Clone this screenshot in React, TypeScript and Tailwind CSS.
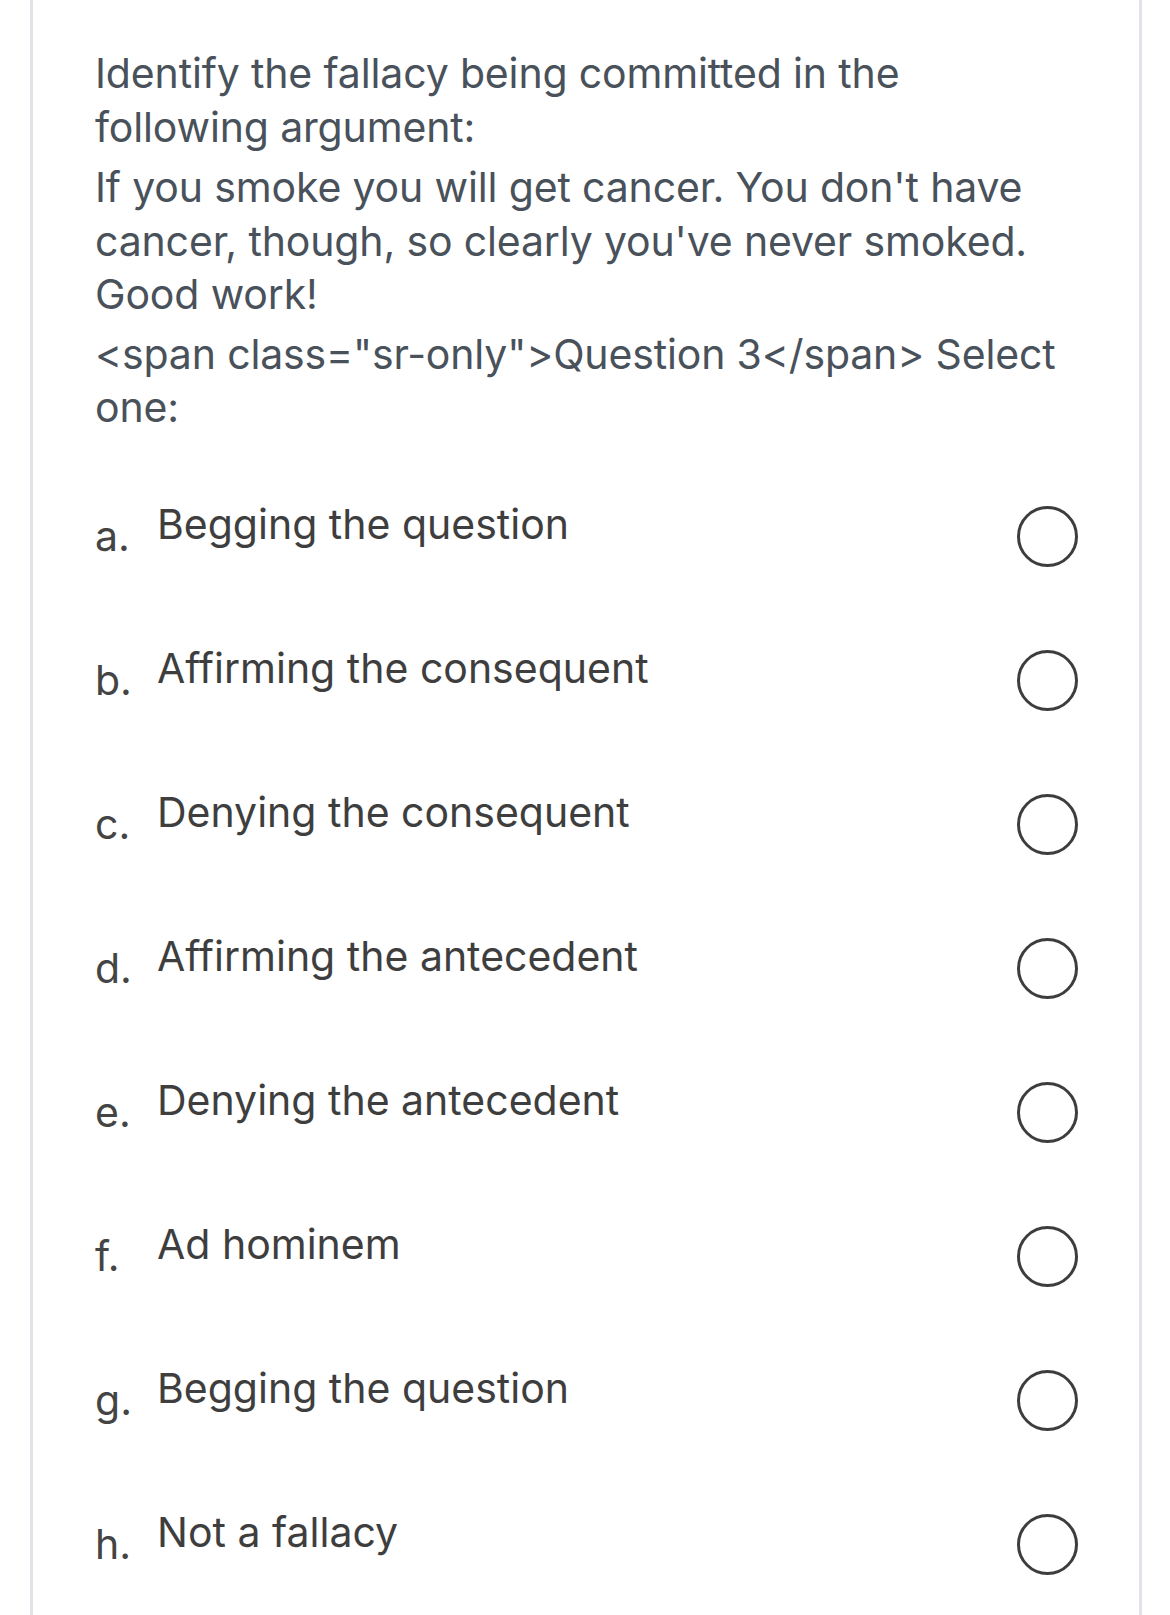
import React from "react";

const options = [
  ["a.", "Begging the question"],
  ["b.", "Affirming the consequent"],
  ["c.", "Denying the consequent"],
  ["d.", "Affirming the antecedent"],
  ["e.", "Denying the antecedent"],
  ["f.", "Ad hominem"],
  ["g.", "Begging the question"],
  ["h.", "Not a fallacy"],
];

export default function App() {
  return (
    <div className="min-h-screen bg-white" style={{ fontFamily: "Inter, 'Noto Sans', sans-serif" }}>
      <div className="ml-[30px] w-[1112px] min-h-[1615px] border-x-[3px] border-[#e1e3e8] pl-[62px] pr-[61px] pt-[47px]">
        <div className="text-[41px] leading-[53.5px] text-[#49515a] tracking-[-0.15px]">
          <p>Identify the fallacy being committed in the following argument:</p>
          <p className="mt-[7px]">
            If you smoke you will get cancer. You don't have cancer, though, so clearly you've never smoked. Good work!
          </p>
          <p className="mt-[6px]">{'<span class="sr-only">Question 3</span> Select one:'}</p>
        </div>
        <div className="mt-[30px]">
          {options.map(([l, t], i) => (
            <div key={i} className="flex h-[144px] items-center">
              <span className="w-[62px] shrink-0 text-[41px] leading-[53.5px] text-[#444444]">{l}</span>
              <span className="mb-[24px] flex-1 text-[41px] leading-[53.5px] text-[#3e3e3e]">{t}</span>
              <span className="h-[61px] w-[61px] shrink-0 rounded-full border-[3px] border-[#3d3d3d]" />
            </div>
          ))}
        </div>
      </div>
    </div>
  );
}
